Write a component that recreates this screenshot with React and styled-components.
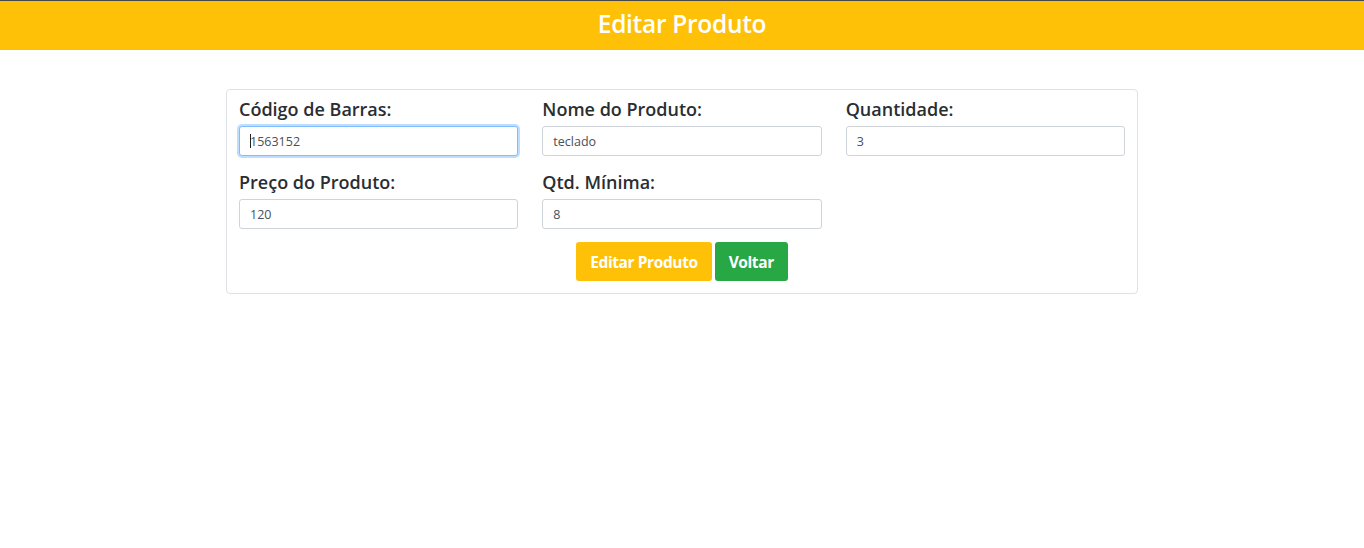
import styled, { createGlobalStyle } from "styled-components"

const GlobalStyle = createGlobalStyle`
    * { box-sizing: border-box; }
    body {
        margin: 0;
        background: #fff;
        font-family: "Open Sans", "Noto Sans", sans-serif;
        color: #212529;
        border-top: 1px solid #474747;
    }
`

const fields = [
    { label: "Código de Barras:", value: "1563152", focused: true },
    { label: "Nome do Produto:", value: "teclado" },
    { label: "Quantidade:", value: "3" },
    { label: "Preço do Produto:", value: "120" },
    { label: "Qtd. Mínima:", value: "8" },
]

export default function App() {
    return (
        <>
            <GlobalStyle />
            <Header>
                <Title>Editar Produto</Title>
            </Header>
            <Card>
                <Grid>
                    {fields.map((f) => (
                        <Field key={f.label}>
                            <Label>{f.label}</Label>
                            <Input focused={f.focused}>
                                {f.focused && <Caret />}
                                {f.value}
                            </Input>
                        </Field>
                    ))}
                </Grid>
                <Actions>
                    <Button color="#ffc107">Editar Produto</Button>
                    <Button color="#28a745">Voltar</Button>
                </Actions>
            </Card>
        </>
    )
}

const Header = styled.header`
    height: 49px;
    background-color: #ffc107;
    display: flex;
    align-items: center;
    justify-content: center;
    padding-bottom: 4px;
`
const Title = styled.h1`
    margin: 0;
    color: #fff;
    font-size: 24.5px;
    font-weight: 600;
    letter-spacing: -0.3px;
`
const Card = styled.div`
    width: 912px;
    margin: 39px auto 0;
    border: 1px solid #dee2e6;
    border-radius: 4px;
    padding: 0 12px 12px;
`
const Grid = styled.div`
    display: grid;
    grid-template-columns: repeat(3, 1fr);
    column-gap: 24px;
    row-gap: 12px;
    padding-top: 5px;
`
const Field = styled.div`
    display: flex;
    flex-direction: column;
`
const Label = styled.label`
    font-size: 18px;
    font-weight: 600;
    line-height: 28px;
    margin-bottom: 3px;
    color: #2a2e33;
    letter-spacing: 0;
`
const Input = styled.div`
    position: relative;
    height: 30px;
    display: flex;
    align-items: center;
    padding: 0 10px;
    font-size: 12.5px;
    color: #495057;
    background: #fff;
    border: 1px solid ${(p) => (p.focused ? "#80bdff" : "#ced4da")};
    border-radius: 3px;
    box-shadow: ${(p) => (p.focused ? "0 0 0 2px rgba(0,123,255,.25)" : "none")};
`
const Caret = styled.span`
    display: inline-block;
    width: 1px;
    height: 14px;
    background: #222;
    margin-right: -1px;
`
const Actions = styled.div`
    display: flex;
    justify-content: center;
    gap: 3px;
    margin-top: 13px;
`
const Button = styled.button`
    height: 39px;
    padding: 0 14px;
    border: none;
    border-radius: 3px;
    background-color: ${(p) => p.color};
    color: #fff;
    font-family: "Open Sans", "Noto Sans", sans-serif;
    font-size: 15.5px;
    font-weight: 700;
    letter-spacing: -0.4px;
    cursor: pointer;
`
